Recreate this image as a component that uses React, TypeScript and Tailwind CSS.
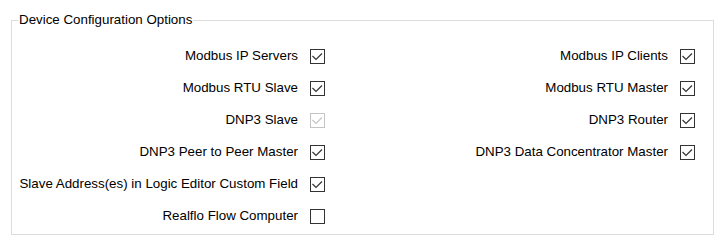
const left = [
  { label: 'Modbus IP Servers', checked: true },
  { label: 'Modbus RTU Slave', checked: true },
  { label: 'DNP3 Slave', checked: true, disabled: true },
  { label: 'DNP3 Peer to Peer Master', checked: true },
  { label: 'Slave Address(es) in Logic Editor Custom Field', checked: true },
  { label: 'Realflo Flow Computer', checked: false }
];

const right = [
  { label: 'Modbus IP Clients', checked: true },
  { label: 'Modbus RTU Master', checked: true },
  { label: 'DNP3 Router', checked: true },
  { label: 'DNP3 Data Concentrator Master', checked: true }
];

type Option = { label: string; checked: boolean; disabled?: boolean };

function CheckBox({ checked, disabled }: { checked: boolean; disabled?: boolean }) {
  return (
    <span
      className={`flex h-[15px] w-[15px] shrink-0 items-center justify-center border bg-white ${
        disabled ? 'border-[#c4c4c4]' : 'border-[#333333]'
      }`}
    >
      {checked && (
        <svg width="13" height="13" viewBox="0 0 13 13" fill="none">
          <polyline
            points="1.5,6 5,9.5 11,3.5"
            stroke={disabled ? '#c4c4c4' : '#333333'}
            strokeWidth="1.2"
          />
        </svg>
      )}
    </span>
  );
}

function Row({ item }: { item: Option }) {
  return (
    <label className="flex h-8 items-center justify-end gap-3">
      <span className="whitespace-nowrap">{item.label}</span>
      <CheckBox checked={item.checked} disabled={item.disabled} />
    </label>
  );
}

export default function App() {
  return (
    <div className="h-[246px] w-[724px] bg-white pt-[12px] pl-[11px] pr-[10px] text-[13.33px] leading-[16px] text-black font-['Liberation_Sans',Arial,sans-serif]">
      <fieldset className="border border-[#dcdcdc] pr-[18px] pt-[12px] pb-[2px]">
        <legend className="ml-[6px] px-[1px]">Device Configuration Options</legend>
        <div className="grid grid-cols-2 gap-x-[57px]">
          <div className="flex flex-col">
            {left.map((item) => (
              <Row key={item.label} item={item} />
            ))}
          </div>
          <div className="flex flex-col">
            {right.map((item) => (
              <Row key={item.label} item={item} />
            ))}
          </div>
        </div>
      </fieldset>
    </div>
  );
}
